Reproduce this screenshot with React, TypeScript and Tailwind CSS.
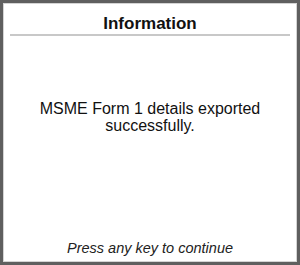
import React from "react";

export default function App() {
  return (
    <div className="w-[300px] h-[265px] bg-[#5f5f5f] p-[3px]" style={{ fontFamily: '"Liberation Sans", Arial, sans-serif' }}>
      <div className="w-full h-full bg-[#d4d4d4] p-[1px]">
        <div className="w-full h-full bg-white flex flex-col">
          <div className="text-center text-[17px] font-bold text-[#111] leading-[20px] pt-[10px]">Information</div>
          <div className="mx-[6px] h-[2px] bg-[#c8c8c8]" />
          <div className="text-center text-[16px] text-[#111] leading-[17px] pt-[64px]">
            MSME Form 1 details exported
            <br />
            successfully.
          </div>
          <div className="mt-auto text-center italic text-[14.5px] text-[#222] leading-[16px] pb-[5px]">Press any key to continue</div>
        </div>
      </div>
    </div>
  );
}
